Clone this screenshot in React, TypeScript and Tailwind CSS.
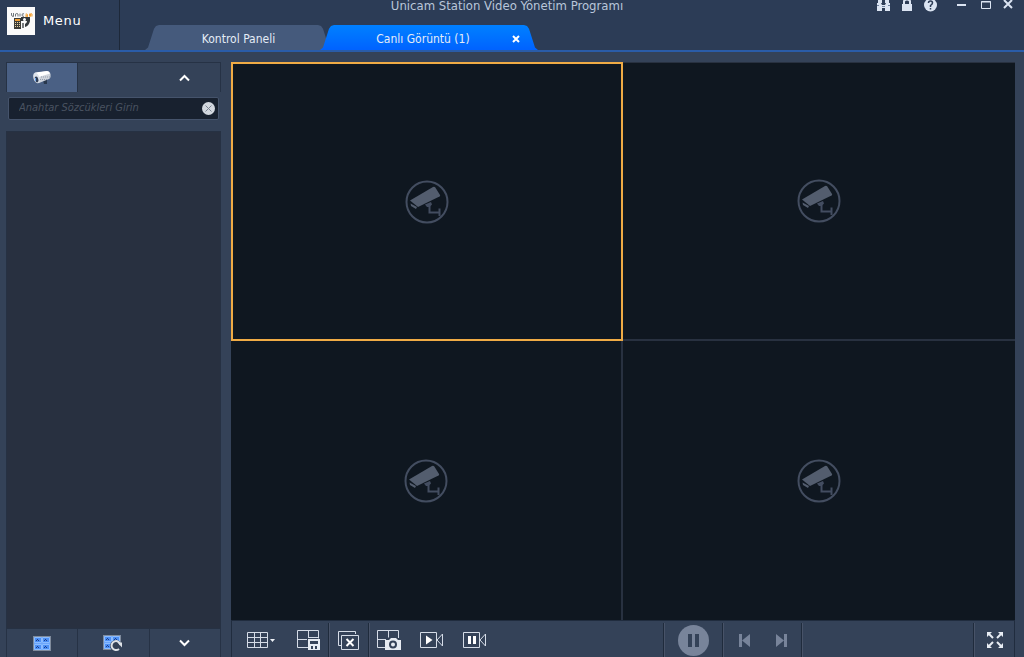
import type { ReactNode } from 'react';

const IconButton = ({ label, className = '', children }: { label: string; className?: string; children: ReactNode }) => (
  <button type="button" aria-label={label} className={`flex items-center justify-center ${className}`}>
    {children}
  </button>
);

const Divider = () => <span className="w-0.5 self-stretch border-l border-[#1f2b3c] bg-[#485368]" />;

const Logo = () => (
  <svg width="28" height="28" viewBox="0 0 28 28">
    <rect width="28" height="28" fill="#fafafa" />
    <g fill="none" strokeWidth="1">
      <path d="M4.5 6v2q0 1.5 2 1.5V6M8.500 9.500V7q1.500-1 2.500 0v2.500M13 6.500v3M17 6.800q-2-.6-2 1.200t2 1.300" stroke="#70777c" />
      <path d="M18.500 7.200q2-.8 2 .6v2q-2 .3-2-.8t2-.7M22.500 9.500V7q1.200-.6 1.200 0v2.500-2.500q1.300-.7 1.300 0v2.500" stroke="#f3a033" />
    </g>
    <rect x="7" y="11" width="7" height="11" fill="#3d3c37" />
    <path d="M8 12h5v2H8z" fill="#f3a033" />
    <path d="M8 15.500h5M8 17.500h5M8 19.500h5" stroke="#e8d5a6" strokeDasharray="1 1" />
    <path d="M14 10h9v4q-1 5-5 6v-3q2-1 2-3h-6z" fill="#33383c" />
    <circle cx="17.500" cy="12.500" r="1.500" fill="#fafafa" />
    <path d="M15 16h2v5h-2z" fill="#777b7d" />
  </svg>
);

const BulletCam = () => (
  <svg width="20" height="16" viewBox="0 0 20 16">
    <path d="M11 10h4v4h-3z" fill="#29384d" />
    <path d="M4 3 15 1q3 0 3.500 3.500Q19 8 17 9L7 13z" fill="#cfd4dc" />
    <path d="M3 2.500 15 1q2 0 3 2.500L7 7z" fill="#fff" />
    <path d="M9 7h9M8 9.500h8" stroke="#939caa" strokeDasharray="1 1" />
    <ellipse cx="4.500" cy="8" rx="3" ry="5.500" fill="#dde2ea" transform="rotate(-18 4.500 8)" />
    <ellipse cx="4.500" cy="9.500" rx="1.700" ry="3" fill="#2d3c55" transform="rotate(-18 4.500 9)" />
    <path d="M3.500 8v3" stroke="#6ba5ee" />
  </svg>
);

const Chevron = ({ down = false }: { down?: boolean }) => (
  <svg width="11" height="8" viewBox="0 0 11 8" fill="none" stroke="#fff" strokeWidth="2">
    <path d={down ? 'M1 1.500 5.500 6 10 1.500' : 'M1 6.500 5.500 2 10 6.500'} />
  </svg>
);

const NoVideo = () => (
  <svg width="44" height="44" viewBox="0 0 44 44" fill="none" stroke="#434d60">
    <circle cx="22" cy="22" r="20.500" strokeWidth="2" />
    <path d="M5 20.500 28 7q1.500-.7 2.500.8L35 15q.5 1-.5 1.500L13 27z" fill="#535d6e" stroke="none" />
    <path d="m5.500 23.500 6.500 3.500-1 2-5-3z" fill="#535d6e" stroke="none" />
    <path d="m20 24.500 6-2.500 1 2.500-2.500 2.500H22z" fill="#434d60" stroke="none" />
    <path d="M24.500 25v7.500H34M34.500 28.500V36" strokeWidth="2" />
  </svg>
);

const Tiles = ({ x, y }: { x: number; y: number }) => (
  <g transform={`translate(${x} ${y})`}>
    <rect width="8" height="6" fill="#4c8ff5" />
    <path d="M.5.5h7v5h-7z" fill="none" stroke="#8bbcff" />
    <path d="M2 3.500h4M3 2.500h2" stroke="#1c3f8a" strokeDasharray="1 1" />
  </g>
);

const GroupIcon = () => (
  <svg width="18" height="15" viewBox="0 0 18 15">
    <rect width="18" height="15" fill="#7f8b9c" />
    <rect x="1" y="1" width="16" height="13" fill="#6ba5fa" />
    <Tiles x={1} y={1} />
    <Tiles x={9} y={1} />
    <Tiles x={1} y={8} />
    <Tiles x={9} y={8} />
  </svg>
);

const PatrolIcon = () => (
  <svg width="20" height="18" viewBox="0 0 20 18">
    <path d="M0 1h18v8H9v7H0z" fill="#7f8b9c" />
    <path d="M1 2h16v7H9v6H1z" fill="#6ba5fa" />
    <Tiles x={1} y={2} />
    <Tiles x={9} y={2} />
    <Tiles x={1} y={9} />
    <circle cx="13" cy="12" r="6" fill="#344258" />
    <path d="M16 15a4.500 4.500 0 1 1 1.500-4" fill="none" stroke="#dfe3e8" strokeWidth="2" />
    <path d="M14.500 8.500H19v5z" fill="#dfe3e8" />
  </svg>
);

const LayoutIcon = () => (
  <svg width="28" height="18" viewBox="0 0 28 18" fill="none" stroke="#d5dce7">
    <path d="M.5 1.500h20v15H.5zM.5 6.500h20M.5 11.500h20M7.500 1.500v15M13.500 1.500v15" />
    <path d="M23 8h5l-2.500 3z" fill="#eef2f7" stroke="none" />
  </svg>
);

const SaveViewIcon = () => (
  <svg width="24" height="22" viewBox="0 0 24 22" fill="none" stroke="#d5dce7">
    <path d="M11 18.500H.5v-17h21v8M.5 10.500H10M11.500 1.500v7M11 8.500h11" />
    <path d="M11 10h12v11H11z" fill="#e6ebf2" stroke="none" />
    <path d="M13 12h8v3h-8zM14 17h6v3h-6z" fill="#344258" stroke="none" />
    <path d="M17 17v3" stroke="#e6ebf2" strokeWidth="2" />
  </svg>
);

const CloseAllIcon = () => (
  <svg width="22" height="21" viewBox="0 0 22 21" fill="none" stroke="#d5dce7">
    <path d="M3 15.500H.5V1.500h17V4" />
    <path d="M3.500 5.500h17v14h-17z" />
    <path d="m8.500 9 7 7M15.500 9l-7 7" stroke="#fff" strokeWidth="2" />
  </svg>
);

const SnapshotIcon = () => (
  <svg width="24" height="22" viewBox="0 0 24 22" fill="none" stroke="#d5dce7">
    <path d="M8 18.500H.5v-17h21V9M.5 10.500H9M11.500 1.500v7" />
    <path d="M8 11h4l2-2h5l2 2h3v10H8z" fill="#e6ebf2" stroke="none" />
    <circle cx="16" cy="15.500" r="3" fill="#e6ebf2" stroke="#344258" strokeWidth="2" />
  </svg>
);

const VideoIcon = ({ paused = false }: { paused?: boolean }) => (
  <svg width="24" height="18" viewBox="0 0 24 18" fill="none" stroke="#d5dce7">
    <path d="M.5 1.500h16v15H.5zM17 9l5.500-6v12z" />
    {paused ? (
      <path d="M5 5h3v8H5zM10 5h3v8h-3z" fill="#fff" stroke="none" />
    ) : (
      <path d="M6 4.500 12.500 9 6 13.500z" fill="#fff" stroke="none" />
    )}
  </svg>
);

const SkipIcon = ({ next = false }: { next?: boolean }) => (
  <svg width="12" height="13" viewBox="0 0 12 13" fill="#78849a">
    {next ? <path d="M0 0 8 6.500 0 13zM8 0h3v13H8z" /> : <path d="M12 0 4 6.500l8 6.500zM1 0h3v13H1z" />}
  </svg>
);

const Header = () => (
  <header className="flex h-[52px] shrink-0 border-b-2 border-[#2a5ca8] bg-[#2c3c56]">
    <button type="button" className="flex w-[120px] shrink-0 items-start gap-2 border-r border-[#1d2839] pl-[7px] pt-[7px] text-left">
      <Logo />
      <span className="pt-1 font-[DejaVu_Sans,sans-serif] text-[13px]/5 font-medium tracking-wider text-white">Menu</span>
    </button>
    <div className="flex min-w-0 flex-1 flex-col justify-between">
      <div className="flex h-4">
        <h1 className="min-w-0 flex-1 whitespace-nowrap pl-[18px] text-center text-[13px]/3 text-[#b9c6da]">
          Unicam Station Video Yönetim Programı
        </h1>
        <div className="flex w-[148px] shrink-0 items-start text-[#dbe4f2]">
          <IconButton label="Kullanıcı değiştir">
            <svg width="15" height="12" viewBox="0 0 15 12" fill="currentColor">
              <path d="M2 0h4v3H2zM9 0h4v3H9zM1 3h4l1 2h3l1-2h4v8H9V8H6v3H1z" />
              <path d="M1 5h2v1H1zM12 5h2v1h-2zM6 6h3v1H6z" fill="#6f819e" />
            </svg>
          </IconButton>
          <IconButton label="Kilitle" className="ml-[11px]">
            <svg width="10" height="12" viewBox="0 0 10 12" fill="currentColor">
              <path d="M0 4h10v7H0z" />
              <path d="M2 4V1q3-3 6 0v3" fill="none" stroke="currentColor" strokeWidth="2" />
            </svg>
          </IconButton>
          <IconButton label="Yardım" className="ml-3">
            <svg width="13" height="12" viewBox="0 0 13 12">
              <circle cx="6.500" cy="5" r="6.500" fill="currentColor" />
              <path d="M4.500 3q0-2 2-2t2 2q0 1-2 2.500V7M6.500 8v1.500" fill="none" stroke="#2c3c56" strokeWidth="1.500" />
            </svg>
          </IconButton>
          <IconButton label="Simge durumuna küçült" className="ml-5">
            <svg width="10" height="10" viewBox="0 0 10 10" fill="currentColor">
              <path d="M0 4h9v2H0z" />
            </svg>
          </IconButton>
          <IconButton label="Ekranı kapla" className="ml-3.5">
            <svg width="10" height="10" viewBox="0 0 10 10" fill="none" stroke="currentColor">
              <path d="M.5 1.500h9v7h-9zM0 2h10" />
            </svg>
          </IconButton>
          <IconButton label="Kapat" className="ml-3">
            <svg width="10" height="10" viewBox="0 0 10 10" fill="none" stroke="currentColor" strokeWidth="2">
              <path d="m1 0 8 8M9 0 1 8" />
            </svg>
          </IconButton>
        </div>
      </div>
      <nav className="flex pl-[25px] text-xs text-[#e4ecf7]">
        <button
          type="button"
          className="h-[25px] w-[187px] bg-[#455a7c] pt-0.5 [clip-path:polygon(0_100%,3px_90%,9px_15%,11px_4%,14px_0,calc(100%_-_14px)_0,calc(100%_-_11px)_4%,calc(100%_-_9px)_15%,calc(100%_-_3px)_90%,100%_100%)]"
        >
          Kontrol Paneli
        </button>
        <div className="-ml-3 flex h-[25px] w-[218px] items-center bg-linear-to-b from-[#0080ff] to-[#0062ff] pt-0.5 [clip-path:polygon(0_100%,3px_90%,9px_15%,11px_4%,14px_0,calc(100%_-_14px)_0,calc(100%_-_11px)_4%,calc(100%_-_9px)_15%,calc(100%_-_3px)_90%,100%_100%)]">
          <button type="button" aria-current="page" className="flex-1 pl-3.5">
            Canlı Görüntü (1)
          </button>
          <IconButton label="Sekmeyi kapat" className="mr-[18px]">
            <svg width="8" height="8" viewBox="0 0 8 8" stroke="#fff" strokeWidth="2">
              <path d="m1 1 6 6M7 1 1 7" />
            </svg>
          </IconButton>
        </div>
      </nav>
    </div>
  </header>
);

const Sidebar = () => (
  <aside className="flex w-[215px] shrink-0 flex-col">
    <div className="flex h-[30px] border border-b-0 border-[#263245]">
      <IconButton label="Kameralar" className="w-[71px] border-r border-[#263245] bg-[#4a6084]">
        <BulletCam />
      </IconButton>
      <div className="flex flex-1 justify-end">
        <IconButton label="Daralt" className="w-[71px]">
          <Chevron />
        </IconButton>
      </div>
    </div>
    <div className="mx-0.5 mt-[5px] flex h-[23px] items-center rounded-xs border border-[#45536b] bg-[#18212f] pr-1">
      <input
        type="text"
        aria-label="Anahtar Sözcükleri Girin"
        placeholder="Anahtar Sözcükleri Girin"
        className="min-w-0 flex-1 bg-transparent pl-2.5 text-[11px] italic text-white outline-none placeholder:text-[#4a5361]"
      />
      <IconButton label="Temizle" className="-mr-1 w-5">
        <svg width="13" height="13" viewBox="0 0 13 13">
          <circle cx="6.500" cy="6.500" r="6.500" fill="#d3d8df" />
          <path d="m3.500 3.500 6 6M9.500 3.500l-6 6" stroke="#7c8593" />
        </svg>
      </IconButton>
    </div>
    <div className="mt-[11px] flex-1 border border-[#263143] bg-[#283040]" />
    <div className="flex h-7 divide-x divide-[#263245] border-x border-[#263245]">
      <IconButton label="Gruplar" className="flex-1">
        <GroupIcon />
      </IconButton>
      <IconButton label="Sıralı izleme" className="flex-1">
        <PatrolIcon />
      </IconButton>
      <IconButton label="Genişlet" className="flex-1">
        <Chevron down />
      </IconButton>
    </div>
  </aside>
);

const Toolbar = () => (
  <div className="flex h-[37px] shrink-0 items-stretch border border-b-0 border-[#202c3e] pt-0.5">
    <div className="flex gap-[22px] pl-[15px] pr-[7px]">
      <IconButton label="Ekran düzeni">
        <LayoutIcon />
      </IconButton>
      <IconButton label="Görünümü kaydet">
        <SaveViewIcon />
      </IconButton>
    </div>
    <Divider />
    <IconButton label="Tümünü kapat" className="w-[38px]">
      <CloseAllIcon />
    </IconButton>
    <Divider />
    <div className="flex gap-[19px] pl-[7px]">
      <IconButton label="Anlık görüntü">
        <SnapshotIcon />
      </IconButton>
      <IconButton label="Kaydı başlat">
        <VideoIcon />
      </IconButton>
      <IconButton label="Kaydı durdur">
        <VideoIcon paused />
      </IconButton>
    </div>
    <div className="flex-1" />
    <Divider />
    <IconButton label="Duraklat" className="w-[57px]">
      <svg width="31" height="31" viewBox="0 0 31 31">
        <circle cx="15.500" cy="15.500" r="15.500" fill="#78849a" />
        <path d="M10 9h4v13h-4zM17 9h4v13h-4z" fill="#344258" />
      </svg>
    </IconButton>
    <Divider />
    <div className="flex w-[77px] justify-center gap-[26px]">
      <IconButton label="Önceki">
        <SkipIcon />
      </IconButton>
      <IconButton label="Sonraki">
        <SkipIcon next />
      </IconButton>
    </div>
    <Divider />
    <div className="w-[170px]" />
    <Divider />
    <IconButton label="Tam ekran" className="w-[39px]">
      <svg width="16" height="16" viewBox="0 0 16 16" fill="#e8edf4" stroke="#e8edf4" strokeWidth="2">
        <path d="M0 0h5L0 5zM16 0v5l-5-5zM11 16l5-5v5zM0 11l5 5H0z" stroke="none" />
        <path d="m2 2 4 4M14 2l-4 4M2 14l4-4M14 14l-4-4" />
      </svg>
    </IconButton>
  </div>
);

const App = () => (
  <div className="flex h-screen flex-col overflow-hidden bg-[#344258] font-[DejaVu_Sans_Condensed,Noto_Sans,sans-serif]">
    <Header />
    <div className="flex min-h-0 flex-1 gap-2.5 pl-1.5 pr-[9px] pt-2.5">
      <Sidebar />
      <main className="flex min-w-0 flex-1 flex-col">
        <div className="grid min-h-0 flex-1 grid-cols-2 grid-rows-2 bg-[#0f1720]">
          <div className="flex items-center justify-center border-2 border-[#efab45]">
            <NoVideo />
          </div>
          <div className="flex items-center justify-center border-b-2 border-t border-[#283140]">
            <NoVideo />
          </div>
          <div className="flex items-center justify-center border-r-2 border-[#283140]">
            <NoVideo />
          </div>
          <div className="flex items-center justify-center">
            <NoVideo />
          </div>
        </div>
        <Toolbar />
      </main>
    </div>
  </div>
);

export default App;
